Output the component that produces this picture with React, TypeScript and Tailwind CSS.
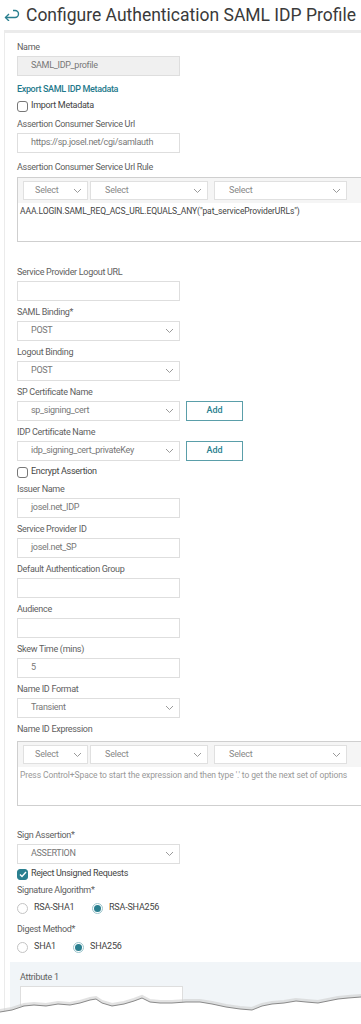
import React from "react";

const teal = "#2a7f8f";

function Chevron() {
  return (
    <svg width="9" height="6" viewBox="0 0 9 6" className="shrink-0">
      <path d="M1 1 L4.5 4.5 L8 1" fill="none" stroke="#9a9a9a" strokeWidth="1" />
    </svg>
  );
}

function Label({ children, className = "" }: { children: React.ReactNode; className?: string }) {
  return (
    <div className={`h-[14px] leading-[14px] text-[9px] tracking-[-0.3px] text-[#606060] ${className}`}>{children}</div>
  );
}

function Input({ value = "", disabled = false }: { value?: string; disabled?: boolean }) {
  return (
    <div
      className={`mt-[2px] h-[20px] w-[163px] border border-[#dedede] pl-[13px] flex items-center text-[9px] tracking-[-0.3px] text-[#777] ${
        disabled ? "bg-[#f0f0f0]" : "bg-white"
      }`}
    >
      {value}
    </div>
  );
}

function Select({ value }: { value: string }) {
  return (
    <div className="mt-[2px] h-[20px] w-[163px] border border-[#dedede] bg-white pl-[13px] pr-[5px] flex items-center justify-between text-[9px] tracking-[-0.3px] text-[#777]">
      <span>{value}</span>
      <Chevron />
    </div>
  );
}

function Field({ label, children }: { label: string; children: React.ReactNode }) {
  return (
    <div className="mb-[4px]">
      <Label>{label}</Label>
      {children}
    </div>
  );
}

function Checkbox({ label, checked = false, className = "" }: { label: string; checked?: boolean; className?: string }) {
  return (
    <div className={`h-[14px] flex items-center gap-[3px] ${className}`}>
      <span
        className={`w-[11px] h-[11px] rounded-[3px] border flex items-center justify-center ${
          checked ? "bg-[#2a7f8f] border-[#2a7f8f]" : "border-[#777] bg-white"
        }`}
      >
        {checked && (
          <svg width="8" height="7" viewBox="0 0 8 7">
            <path d="M1 3.5 L3 5.5 L7 1" fill="none" stroke="white" strokeWidth="1.4" />
          </svg>
        )}
      </span>
      <span className="text-[9px] tracking-[-0.3px] text-[#444]">{label}</span>
    </div>
  );
}

function Radio({ label, checked = false }: { label: string; checked?: boolean }) {
  return (
    <div className="flex items-center gap-[6px]">
      <span
        className={`w-[11px] h-[11px] rounded-full border flex items-center justify-center ${
          checked ? "border-[#9cc5cc] bg-white" : "border-[#c4c4c4] bg-white"
        }`}
      >
        {checked && <span className="w-[7px] h-[7px] rounded-full bg-[#2a7f8f]" />}
      </span>
      <span className="text-[9px] tracking-[-0.2px] text-[#444]">{label}</span>
    </div>
  );
}

function MiniSelect({ w, pl }: { w: string; pl: string }) {
  return (
    <div
      className={`${w} ${pl} h-[19px] border border-[#e0e0e0] bg-white pr-[5px] flex items-center justify-between text-[9px] tracking-[-0.2px] text-[#888]`}
    >
      <span>Select</span>
      <Chevron />
    </div>
  );
}

function ExpressionBox({ text, placeholder = false }: { text: string; placeholder?: boolean }) {
  return (
    <div className="w-[360px] h-[65px] border border-[#cfcfcf] bg-white">
      <div className="h-[25px] bg-[#f5f5f5] pl-[5px] pt-[3px] flex gap-[2px]">
        <MiniSelect w="w-[65px]" pl="pl-[11px]" />
        <MiniSelect w="w-[118px]" pl="pl-[14px]" />
        <div className="w-[2px]" />
        <MiniSelect w="w-[133px]" pl="pl-[14px]" />
      </div>
      <div
        className={`pl-[2px] pt-[2px] text-[8.5px] leading-[12px] tracking-[-0.1px] ${
          placeholder ? "text-[#999]" : "text-[#444]"
        }`}
      >
        {text}
      </div>
    </div>
  );
}

function TornEdge() {
  const pts: [number, number][] = [
    [0, 18], [12, 16], [24, 12], [34, 11], [46, 12], [58, 10], [70, 11], [80, 9], [90, 6], [96, 5],
    [102, 9], [112, 12], [124, 10], [134, 7], [142, 4], [150, 8], [160, 9], [172, 9], [186, 8], [200, 8],
    [212, 10], [226, 13], [240, 15], [252, 16], [262, 12], [272, 10], [284, 9], [296, 7], [306, 8],
    [318, 9], [328, 7], [338, 5], [348, 4], [361, 3],
  ];
  const line = pts.map((p, i) => `${i === 0 ? "M" : "L"}${p[0]} ${p[1]}`).join(" ");
  return (
    <svg width="361" height="30" viewBox="0 0 361 30" className="absolute left-0 bottom-0">
      <path d={`${line} L361 30 L0 30 Z`} fill="white" />
      <path d={line} fill="none" stroke="#cfcfcf" strokeWidth="3" transform="translate(0 -1.5)" opacity="0.6" />
      <path d={line} fill="none" stroke="#8a8a8a" strokeWidth="1" />
    </svg>
  );
}

export default function App() {
  return (
    <div className="relative w-[361px] h-[1024px] overflow-hidden bg-white font-['Roboto',sans-serif]">
      <div className="h-[30px] flex items-center pl-[4px] gap-[6px] whitespace-nowrap">
        <svg width="16" height="12" viewBox="0 0 16 12" className="shrink-0">
          <path d="M5 5 L1.5 8.5 L5 12" fill="none" stroke={teal} strokeWidth="1.4" />
          <path d="M1.5 8.5 H11 A3.5 3.5 0 0 0 11 1.5 H9" fill="none" stroke={teal} strokeWidth="1.4" />
        </svg>
        <span className="text-[17.5px] text-[#3a3a3a]">Configure Authentication SAML IDP Profile</span>
      </div>

      <div className="ml-[4px] border-l border-t-[3px] border-[#ebebeb] pl-[12px] pt-[7px] pb-[40px] w-[500px]">
        <Label>Name</Label>
        <Input value="SAML_IDP_profile" disabled />

        <div className="mt-[6px] h-[14px] leading-[14px] text-[9px] tracking-[-0.35px] font-medium text-[#1f7a8c]">
          Export SAML IDP Metadata
        </div>
        <Checkbox label="Import Metadata" className="mt-[3px]" />

        <Label className="mt-[4px]">Assertion Consumer Service Url</Label>
        <Input value="https://sp.josel.net/cgi/samlauth" />

        <Label className="mt-[7px]">Assertion Consumer Service Url Rule</Label>
        <div className="mt-[3px]">
          <ExpressionBox text={'AAA.LOGIN.SAML_REQ_ACS_URL.EQUALS_ANY("pat_serviceProviderURLs")'} />
        </div>

        <div className="mt-[23px]">
          <Field label="Service Provider Logout URL">
            <Input />
          </Field>
          <Field label="SAML Binding*">
            <Select value="POST" />
          </Field>
          <Field label="Logout Binding">
            <Select value="POST" />
          </Field>
          <Field label="SP Certificate Name">
            <div className="flex items-end gap-[6px]">
              <Select value="sp_signing_cert" />
              <button className="h-[20px] w-[57px] border border-[#5a9ea9] bg-white text-[9px] font-medium text-[#2a7f8f]">
                Add
              </button>
            </div>
          </Field>
          <Field label="IDP Certificate Name">
            <div className="flex items-end gap-[6px]">
              <Select value="idp_signing_cert_privateKey" />
              <button className="h-[20px] w-[57px] border border-[#5a9ea9] bg-white text-[9px] font-medium text-[#2a7f8f]">
                Add
              </button>
            </div>
          </Field>
        </div>

        <Checkbox label="Encrypt Assertion" />

        <div className="mt-[3px]">
          <Field label="Issuer Name">
            <Input value="josel.net_IDP" />
          </Field>
          <Field label="Service Provider ID">
            <Input value="josel.net_SP" />
          </Field>
          <Field label="Default Authentication Group">
            <Input />
          </Field>
          <Field label="Audience">
            <Input />
          </Field>
          <Field label="Skew Time (mins)">
            <Input value="5" />
          </Field>
          <Field label="Name ID Format">
            <Select value="Transient" />
          </Field>
        </div>

        <Label>Name ID Expression</Label>
        <div className="mt-[5px]">
          <ExpressionBox
            placeholder
            text="Press Control+Space to start the expression and then type '.' to get the next set of options"
          />
        </div>

        <Label className="mt-[22px]">Sign Assertion*</Label>
        <div className="mt-[1px]">
          <Select value="ASSERTION" />
        </div>

        <Checkbox label="Reject Unsigned Requests" checked className="mt-[3px]" />
        <Label className="mt-[2px]">Signature Algorithm*</Label>
        <div className="mt-[4px] h-[14px] flex items-center">
          <div className="w-[75px]">
            <Radio label="RSA-SHA1" />
          </div>
          <Radio label="RSA-SHA256" checked />
        </div>
        <Label className="mt-[7px]">Digest Method*</Label>
        <div className="mt-[4px] h-[14px] flex items-center">
          <div className="w-[56px]">
            <Radio label="SHA1" />
          </div>
          <Radio label="SHA256" checked />
        </div>

        <div className="mt-[8px] -ml-[7px] bg-[#f1f5f8] pl-[10px] pt-[8px] pb-[30px]">
          <Label>Attribute 1</Label>
          <Input />
        </div>
      </div>

      <TornEdge />
    </div>
  );
}
